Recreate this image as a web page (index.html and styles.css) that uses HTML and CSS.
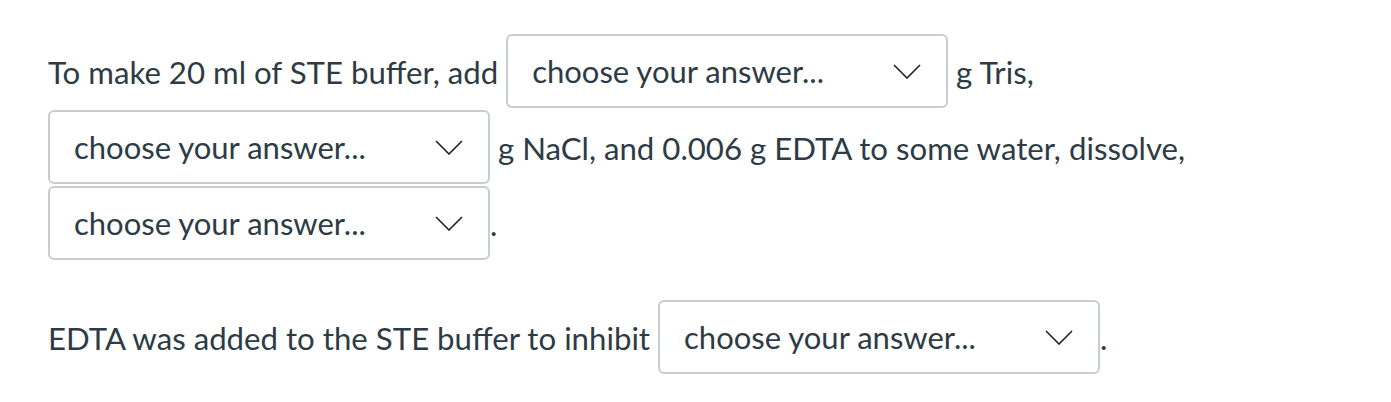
FILE: index.html
```html
<!DOCTYPE html>
<html lang="en">
<head>
<meta charset="utf-8">
<title>STE buffer question</title>
<link rel="stylesheet" href="styles.css">
</head>
<body>
<div class="question">
  <p class="para">To make 20 ml of STE buffer, add <span class="select"><span class="select-label">choose your answer...</span><svg class="chev" width="28" height="15" viewBox="0 0 28 15"><path d="M1 1 L14 14 L27 1" fill="none" stroke="#1f2328" stroke-width="1.6"/></svg></span> g Tris, <span class="select"><span class="select-label">choose your answer...</span><svg class="chev" width="28" height="15" viewBox="0 0 28 15"><path d="M1 1 L14 14 L27 1" fill="none" stroke="#1f2328" stroke-width="1.6"/></svg></span> g NaCl, and 0.006 g EDTA to some water, dissolve, <span class="select"><span class="select-label">choose your answer...</span><svg class="chev" width="28" height="15" viewBox="0 0 28 15"><path d="M1 1 L14 14 L27 1" fill="none" stroke="#1f2328" stroke-width="1.6"/></svg></span>.</p>
  <p class="para">EDTA was added to the STE buffer to inhibit <span class="select"><span class="select-label">choose your answer...</span><svg class="chev" width="28" height="15" viewBox="0 0 28 15"><path d="M1 1 L14 14 L27 1" fill="none" stroke="#1f2328" stroke-width="1.6"/></svg></span>.</p>
</div>
</body>
</html>
```

FILE: styles.css
```css
html, body {
  margin: 0;
  padding: 0;
  background: #ffffff;
}

body {
  font-family: Lato, "Liberation Sans", sans-serif;
  color: #2d3b45;
}

.question {
  padding: 34px 48px 0 48px;
}

.para {
  margin: 0 0 38px 0;
  font-size: 31.2px;
  line-height: 76px;
}

.para:last-child {
  margin-bottom: 0;
}

.select {
  display: inline-flex;
  align-items: center;
  justify-content: space-between;
  box-sizing: border-box;
  width: 442px;
  height: 74px;
  padding: 0 25px 0 24px;
  margin: 0;
  border: 2px solid #c7cdd1;
  border-radius: 6px;
  background: #ffffff;
  vertical-align: top;
  line-height: 1;
}

.select-label {
  font-size: 31px;
  color: #2d3b45;
}

.chev {
  display: block;
  flex: none;
}
```
